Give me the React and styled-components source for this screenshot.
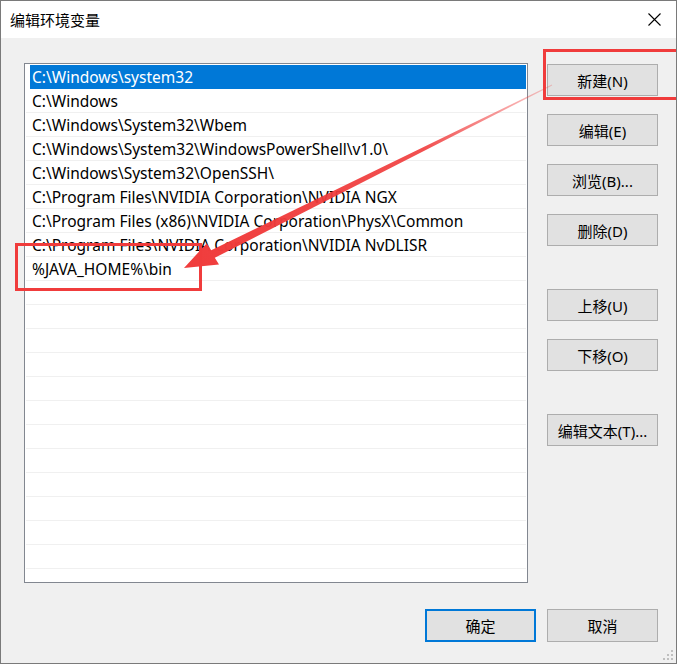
import React from 'react';
import styled, { createGlobalStyle } from 'styled-components';

const GlobalStyle = createGlobalStyle`
    html, body {
        margin: 0;
        padding: 0;
        background: #f0f0f0;
    }
    * {
        box-sizing: border-box;
    }
`;

const Dialog = styled.div`
    position: relative;
    width: 677px;
    height: 664px;
    border: 1px solid #7a7a7a;
    background: #f0f0f0;
    font-family: "Noto Sans", "Noto Sans CJK SC", sans-serif;
    font-size: 15px;
    color: #000;
    overflow: hidden;
`;

const TitleBar = styled.div`
    height: 37px;
    background: #fff;
    display: flex;
    align-items: center;
    justify-content: space-between;
    padding: 0 15px 0 9px;
`;

const Title = styled.span`
    font-family: "Noto Sans CJK SC", sans-serif;
    font-size: 15px;
    line-height: 1;
`;

const CloseButton = styled.span`
    display: flex;
    width: 13px;
    height: 13px;
`;

const Body = styled.div`
    padding: 25px 18px 0 23px;
`;

const Main = styled.div`
    display: grid;
    grid-template-columns: 504px 111px;
    column-gap: 19px;
`;

const PathList = styled.div`
    height: 520px;
    border: 1px solid #828790;
    background: #fff;
    padding: 1px 1px 0 1px;
    overflow: hidden;
`;

const Row = styled.div`
    height: 24px;
    line-height: 24px;
    padding-left: 6px;
    font-size: 15.5px;
    border-bottom: 1px solid ${p => (p.$selected ? 'transparent' : '#f0f0f0')};
    color: ${p => (p.$selected ? '#fff' : '#000')};
    background: ${p => (p.$selected
        ? 'linear-gradient(to right, transparent 4px, #0078d7 4px)'
        : 'transparent')};
    white-space: nowrap;
`;

const ButtonColumn = styled.div`
    display: flex;
    flex-direction: column;
    gap: 43px;
    padding-top: 1px;
`;

const ButtonGroup = styled.div`
    display: flex;
    flex-direction: column;
    gap: 18px;
`;

const Button = styled.button`
    width: 111px;
    height: ${p => (p.$tall ? 33 : 32)}px;
    padding: 0;
    background: #e1e1e1;
    border: ${p => (p.$primary ? '2px solid #0078d7' : '1px solid #adadad')};
    font-family: "Noto Sans", "Noto Sans CJK SC", sans-serif;
    font-size: 15px;
    color: #000;
    display: flex;
    align-items: center;
    justify-content: center;
`;

const Footer = styled.div`
    display: flex;
    justify-content: flex-end;
    gap: 11px;
    margin-top: 26px;
`;

const Highlight = styled.div`
    position: absolute;
    left: ${p => p.$x}px;
    top: ${p => p.$y}px;
    width: ${p => p.$w}px;
    height: ${p => p.$h}px;
    border: 3px solid #f03c3c;
    pointer-events: none;
`;

const Overlay = styled.svg`
    position: absolute;
    left: -1px;
    top: -1px;
    pointer-events: none;
`;

const Grip = styled.svg`
    position: absolute;
    right: 2px;
    bottom: 2px;
`;

const paths = [
    'C:\\Windows\\system32',
    'C:\\Windows',
    'C:\\Windows\\System32\\Wbem',
    'C:\\Windows\\System32\\WindowsPowerShell\\v1.0\\',
    'C:\\Windows\\System32\\OpenSSH\\',
    'C:\\Program Files\\NVIDIA Corporation\\NVIDIA NGX',
    'C:\\Program Files (x86)\\NVIDIA Corporation\\PhysX\\Common',
    'C:\\Program Files\\NVIDIA Corporation\\NVIDIA NvDLISR',
    '%JAVA_HOME%\\bin',
];

const rows = [...paths, ...Array(13).fill('')];

// tapered pointer drawn from the 新建 button down to the new entry
function Pointer() {
    return (
        <Overlay width="677" height="664" viewBox="0 0 677 664">
            <defs>
                <linearGradient id="fade" x1="552" y1="85" x2="184" y2="268" gradientUnits="userSpaceOnUse">
                    <stop offset="0" stopColor="#f03c3c" stopOpacity="0.25" />
                    <stop offset="0.35" stopColor="#f03c3c" stopOpacity="0.9" />
                    <stop offset="1" stopColor="#f03c3c" stopOpacity="1" />
                </linearGradient>
            </defs>
            <polygon
                fill="url(#fade)"
                points="552.2,85.4 214.8,257.8 219.0,264.6 184,268 206.8,243.2 211.2,250.2 551.8,84.6"
            />
        </Overlay>
    );
}

function App() {
    return (
        <>
            <GlobalStyle />
            <Dialog>
                <TitleBar>
                    <Title>编辑环境变量</Title>
                    <CloseButton>
                        <svg width="13" height="13" viewBox="0 0 13 13">
                            <path d="M0.5 0.5 L12.5 12.5 M12.5 0.5 L0.5 12.5" stroke="#000" strokeWidth="1.1" />
                        </svg>
                    </CloseButton>
                </TitleBar>
                <Body>
                    <Main>
                        <PathList>
                            {rows.map((r, i) => (
                                <Row key={i} $selected={i === 0}>{r}</Row>
                            ))}
                        </PathList>
                        <ButtonColumn>
                            <ButtonGroup>
                                <Button>新建(N)</Button>
                                <Button>编辑(E)</Button>
                                <Button>浏览(B)...</Button>
                                <Button>删除(D)</Button>
                            </ButtonGroup>
                            <ButtonGroup>
                                <Button>上移(U)</Button>
                                <Button>下移(O)</Button>
                            </ButtonGroup>
                            <ButtonGroup>
                                <Button>编辑文本(T)...</Button>
                            </ButtonGroup>
                        </ButtonColumn>
                    </Main>
                    <Footer>
                        <Button $tall $primary>确定</Button>
                        <Button $tall>取消</Button>
                    </Footer>
                </Body>
                <Grip width="11" height="11" viewBox="0 0 11 11">
                    <g fill="#bfbfbf">
                        <rect x="8" y="0" width="2" height="2" />
                        <rect x="4" y="4" width="2" height="2" />
                        <rect x="8" y="4" width="2" height="2" />
                        <rect x="0" y="8" width="2" height="2" />
                        <rect x="4" y="8" width="2" height="2" />
                        <rect x="8" y="8" width="2" height="2" />
                    </g>
                </Grip>
                <Highlight $x={542} $y={48} $w={140} $h={51} />
                <Highlight $x={14} $y={242} $w={187} $h={48} />
                <Pointer />
            </Dialog>
        </>
    );
}

export default App;
